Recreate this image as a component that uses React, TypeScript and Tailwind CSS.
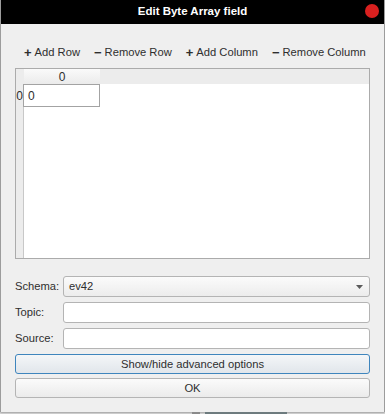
import React from 'react';

const font = { fontFamily: '"Liberation Sans", Arial, sans-serif' };

function ToolButton({ sign, label }: { sign: string; label: string }) {
    return (
        <span className="flex items-center gap-[3px] whitespace-nowrap">
            <span className="text-[13px] leading-none font-bold">{sign}</span>
            <span>{label}</span>
        </span>
    );
}

function FieldRow({ label, children }: { label: string; children: React.ReactNode }) {
    return (
        <div className="flex items-center h-[21px]">
            <span className="w-[48px] shrink-0">{label}</span>
            {children}
        </div>
    );
}

export default function App() {
    return (
        <div className="w-[385px] h-[414px] bg-[#e6e6e6] overflow-hidden text-[11.2px] text-[#2e2e2e]" style={font}>
            <div className="h-[412px] flex flex-col bg-[#efefef] border-l border-r border-[#9c9c9c] shadow-[0_1px_2px_rgba(0,0,0,0.35)]">
                {/* Title bar */}
                <div className="relative h-[24px] shrink-0 bg-black flex items-center justify-center">
                    <span className="text-white font-bold text-[11.5px]">Edit Byte Array field</span>
                    <span className="absolute right-[5px] top-[4px] w-[14px] h-[14px] rounded-full bg-[#d9201f]" />
                </div>

                <div className="flex flex-col px-[14px]">
                    {/* Toolbar */}
                    <div className="flex items-center h-[16px] mt-[20px] pl-[9px] gap-[14px]">
                        <ToolButton sign="+" label="Add Row" />
                        <ToolButton sign="−" label="Remove Row" />
                        <ToolButton sign="+" label="Add Column" />
                        <ToolButton sign="−" label="Remove Column" />
                    </div>

                    {/* Table */}
                    <div className="mt-[8px] h-[191px] border border-[#ababab] bg-white flex flex-col overflow-hidden">
                        <div className="flex h-[15px] shrink-0 bg-[#ececec]">
                            <div className="w-[8px] shrink-0" />
                            <div className="w-[76px] flex items-center justify-center bg-gradient-to-b from-[#fafafa] to-[#ebebeb] text-[12px]">0</div>
                        </div>
                        <div className="flex flex-1">
                            <div className="w-[8px] shrink-0 bg-[#ececec] border-r border-[#c8c8c8] flex flex-col">
                                <div className="h-[23px] flex items-center justify-center text-[12px]">0</div>
                            </div>
                            <div className="flex flex-col">
                                <div className="w-[77px] h-[23px] -ml-px border border-[#a3a3a3] bg-white flex items-center pl-[4px] text-[12px]">0</div>
                            </div>
                        </div>
                    </div>

                    {/* Form */}
                    <div className="flex flex-col gap-[5px] mt-[17px]">
                        <FieldRow label="Schema:">
                            <div className="flex-1 h-[21px] rounded-[3px] border border-[#b4b4b4] bg-gradient-to-b from-[#fbfbfb] to-[#ececec] flex items-center justify-between pl-[5px] pr-[6px]">
                                <span>ev42</span>
                                <svg width="7" height="4" viewBox="0 0 7 4"><path d="M0 0h7L3.5 4z" fill="#5a5a5a" /></svg>
                            </div>
                        </FieldRow>
                        <FieldRow label="Topic:">
                            <div className="flex-1 h-[21px] rounded-[3px] border border-[#b4b4b4] bg-white" />
                        </FieldRow>
                        <FieldRow label="Source:">
                            <div className="flex-1 h-[21px] rounded-[3px] border border-[#b4b4b4] bg-white" />
                        </FieldRow>
                    </div>

                    {/* Buttons */}
                    <button className="mt-[5px] h-[20px] w-full rounded-[3px] border border-[#3e85bd] bg-gradient-to-b from-[#f4f6f8] to-[#e1e6eb] flex items-center justify-center">
                        Show/hide advanced options
                    </button>
                    <button className="mt-[4px] h-[20px] w-full rounded-[3px] border border-[#b4b4b4] bg-gradient-to-b from-[#fbfbfb] to-[#ebebeb] flex items-center justify-center">
                        OK
                    </button>
                </div>
            </div>
            <div className="relative h-[2px]">
                <div className="absolute left-[192px] w-[8px] h-[2px] bg-[#8a8a8a]" />
                <div className="absolute left-[205px] w-[82px] h-[2px] bg-[#6d7b7e]" />
            </div>
        </div>
    );
}
